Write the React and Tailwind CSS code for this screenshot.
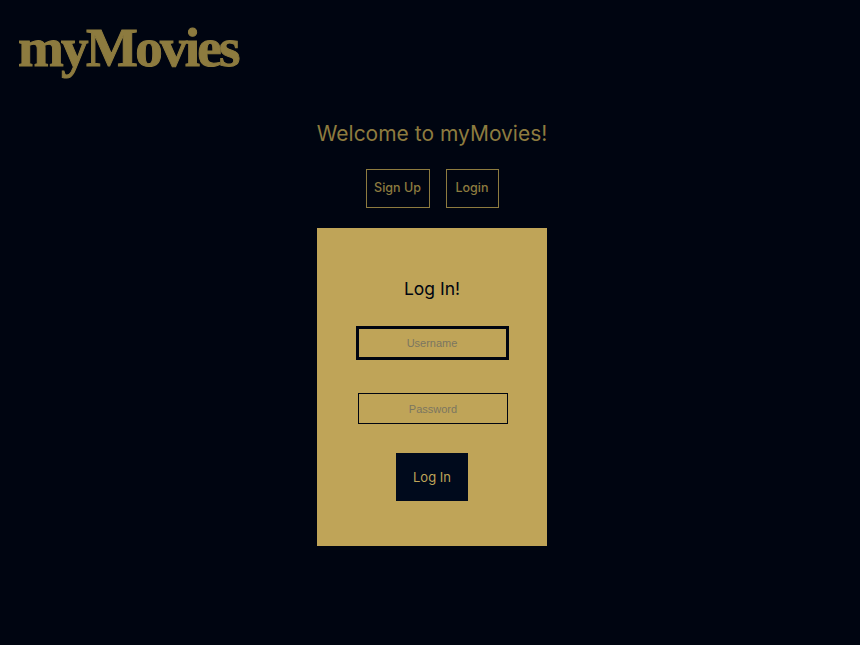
export default function App() {
  return (
    <div className="min-h-[645px] bg-[#000511] font-['Inter',sans-serif] overflow-hidden">
      <header className="h-[100px] pl-[18px] pt-[16px]">
        <h1 className="font-['Liberation_Serif',serif] font-bold text-[55px] leading-[64px] tracking-[-2.7px] text-[#8d7b3f] [-webkit-text-stroke:1px_#8d7b3f]">myMovies</h1>
      </header>

      <main className="ml-[4px] flex flex-col items-center">
        <h2 className="mt-[21px] text-[21px] leading-[26px] text-[#8d7b3f]">Welcome to myMovies!</h2>

        <div className="mt-[22px] flex gap-[16px]">
          <button className="w-[64px] h-[39px] border border-[#8d7b3f] text-[12.5px] font-medium text-[#8d7b3f]">Sign Up</button>
          <button className="w-[53px] h-[39px] border border-[#8d7b3f] text-[12.5px] font-medium text-[#8d7b3f]">Login</button>
        </div>

        <form className="mt-[20px] w-[230px] h-[318px] bg-[#bfa458] flex flex-col items-center">
          <h3 className="mt-[49px] text-[17.5px] leading-[24px] text-[#000511]">Log In!</h3>

          <input
            placeholder="Username"
            className="mt-[25px] w-[153px] h-[34px] border-[3px] border-[#000511] bg-transparent text-center text-[11px] font-['Liberation_Sans',sans-serif] text-[#000511] placeholder:text-[#7b7660] outline-none"
          />
          <input
            placeholder="Password"
            className="mt-[33px] ml-[2px] w-[150px] h-[31px] border border-[#000511] bg-transparent text-center text-[11px] font-['Liberation_Sans',sans-serif] text-[#000511] placeholder:text-[#7b7660] outline-none"
          />

          <button type="button" className="mt-[29px] pt-[1px] w-[72px] h-[48px] bg-[#000a1c] text-[13px] text-[#bfa458]">Log In</button>
        </form>
      </main>
    </div>
  )
}
